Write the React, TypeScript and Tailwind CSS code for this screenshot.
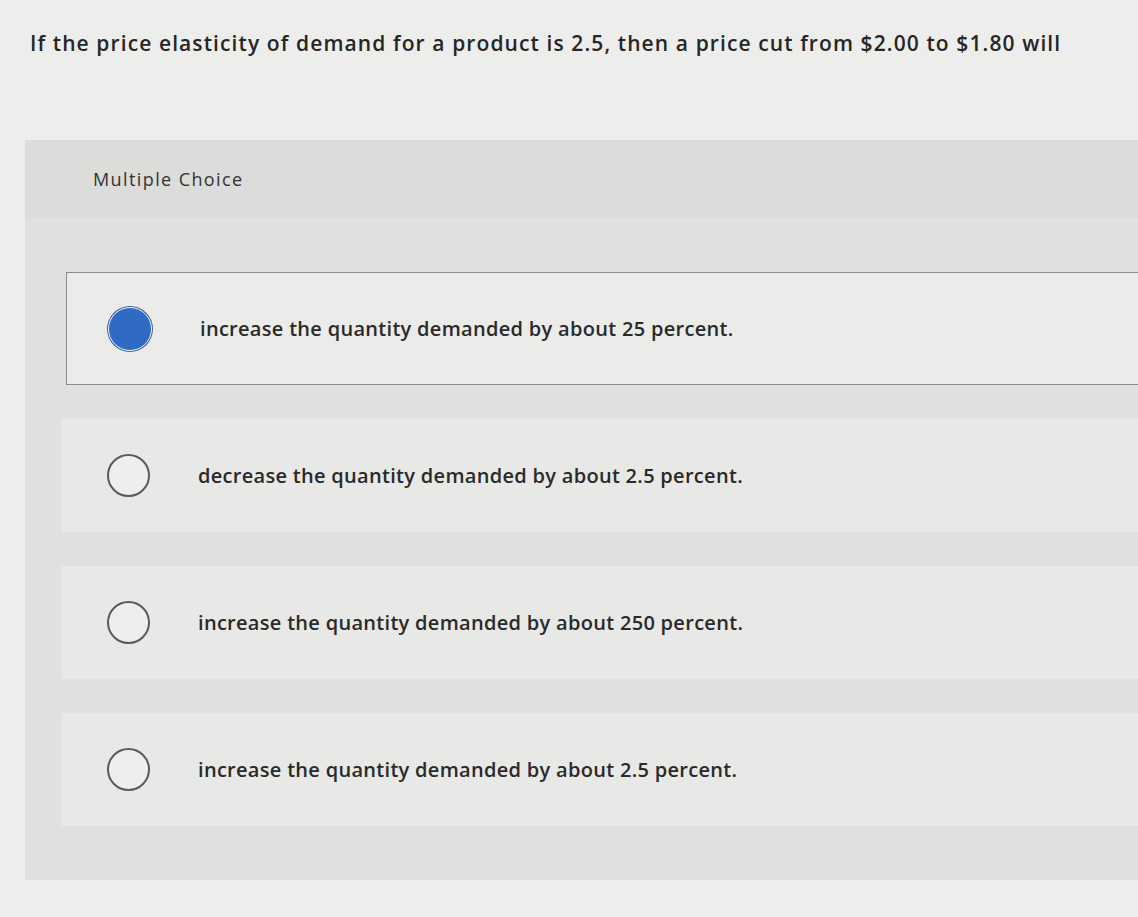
import React from "react";

const options = [
  { text: "increase the quantity demanded by about 25 percent.", selected: true },
  { text: "decrease the quantity demanded by about 2.5 percent.", selected: false },
  { text: "increase the quantity demanded by about 250 percent.", selected: false },
  { text: "increase the quantity demanded by about 2.5 percent.", selected: false },
];

export default function App() {
  return (
    <div
      className="w-[1138px] h-[917px] overflow-hidden bg-[#ededeb] text-[#262626]"
      style={{ fontFamily: "'Open Sans', Lato, sans-serif" }}
    >
      <div className="pt-[28px] pl-[30px] h-[140px]">
        <p className="text-[21px] font-semibold tracking-[1.1px] leading-[30px] whitespace-nowrap">
          If the price elasticity of demand for a product is 2.5, then a price cut from $2.00 to $1.80 will
        </p>
      </div>
      <div className="ml-[25px]">
        <div className="h-[78px] bg-[#dcdcda] flex items-center pl-[68px]">
          <span className="text-[18px] font-medium text-[#333] tracking-[1.4px]">Multiple Choice</span>
        </div>
        <div className="h-[662px] bg-[#e0e0de] pt-[54px] flex flex-col gap-[34px]">
          {options.map((o, i) => (
            <div
              key={i}
              className={
                o.selected
                  ? "ml-[41px] h-[113px] flex items-center bg-[#ebebe9] border-[1.5px] border-r-0 border-[#8c8c8a]"
                  : "ml-[36px] h-[113px] flex items-center bg-[#e8e8e6]"
              }
            >
              <div className={o.selected ? "ml-[41px]" : "ml-[46px]"}>
                {o.selected ? (
                  <div className="w-[44px] h-[44px] rounded-full bg-[#2f6bc4] border border-[#f4f4f2] shadow-[0_0_0_1px_#3b5f9e]" />
                ) : (
                  <div className="w-[43px] h-[43px] rounded-full border-2 border-[#5a5a5a] bg-[#eeeeec]" />
                )}
              </div>
              <span className="ml-[48px] text-[20px] font-semibold text-[#2a2a2a] tracking-[0.3px] whitespace-nowrap">
                {o.text}
              </span>
            </div>
          ))}
        </div>
      </div>
    </div>
  );
}
